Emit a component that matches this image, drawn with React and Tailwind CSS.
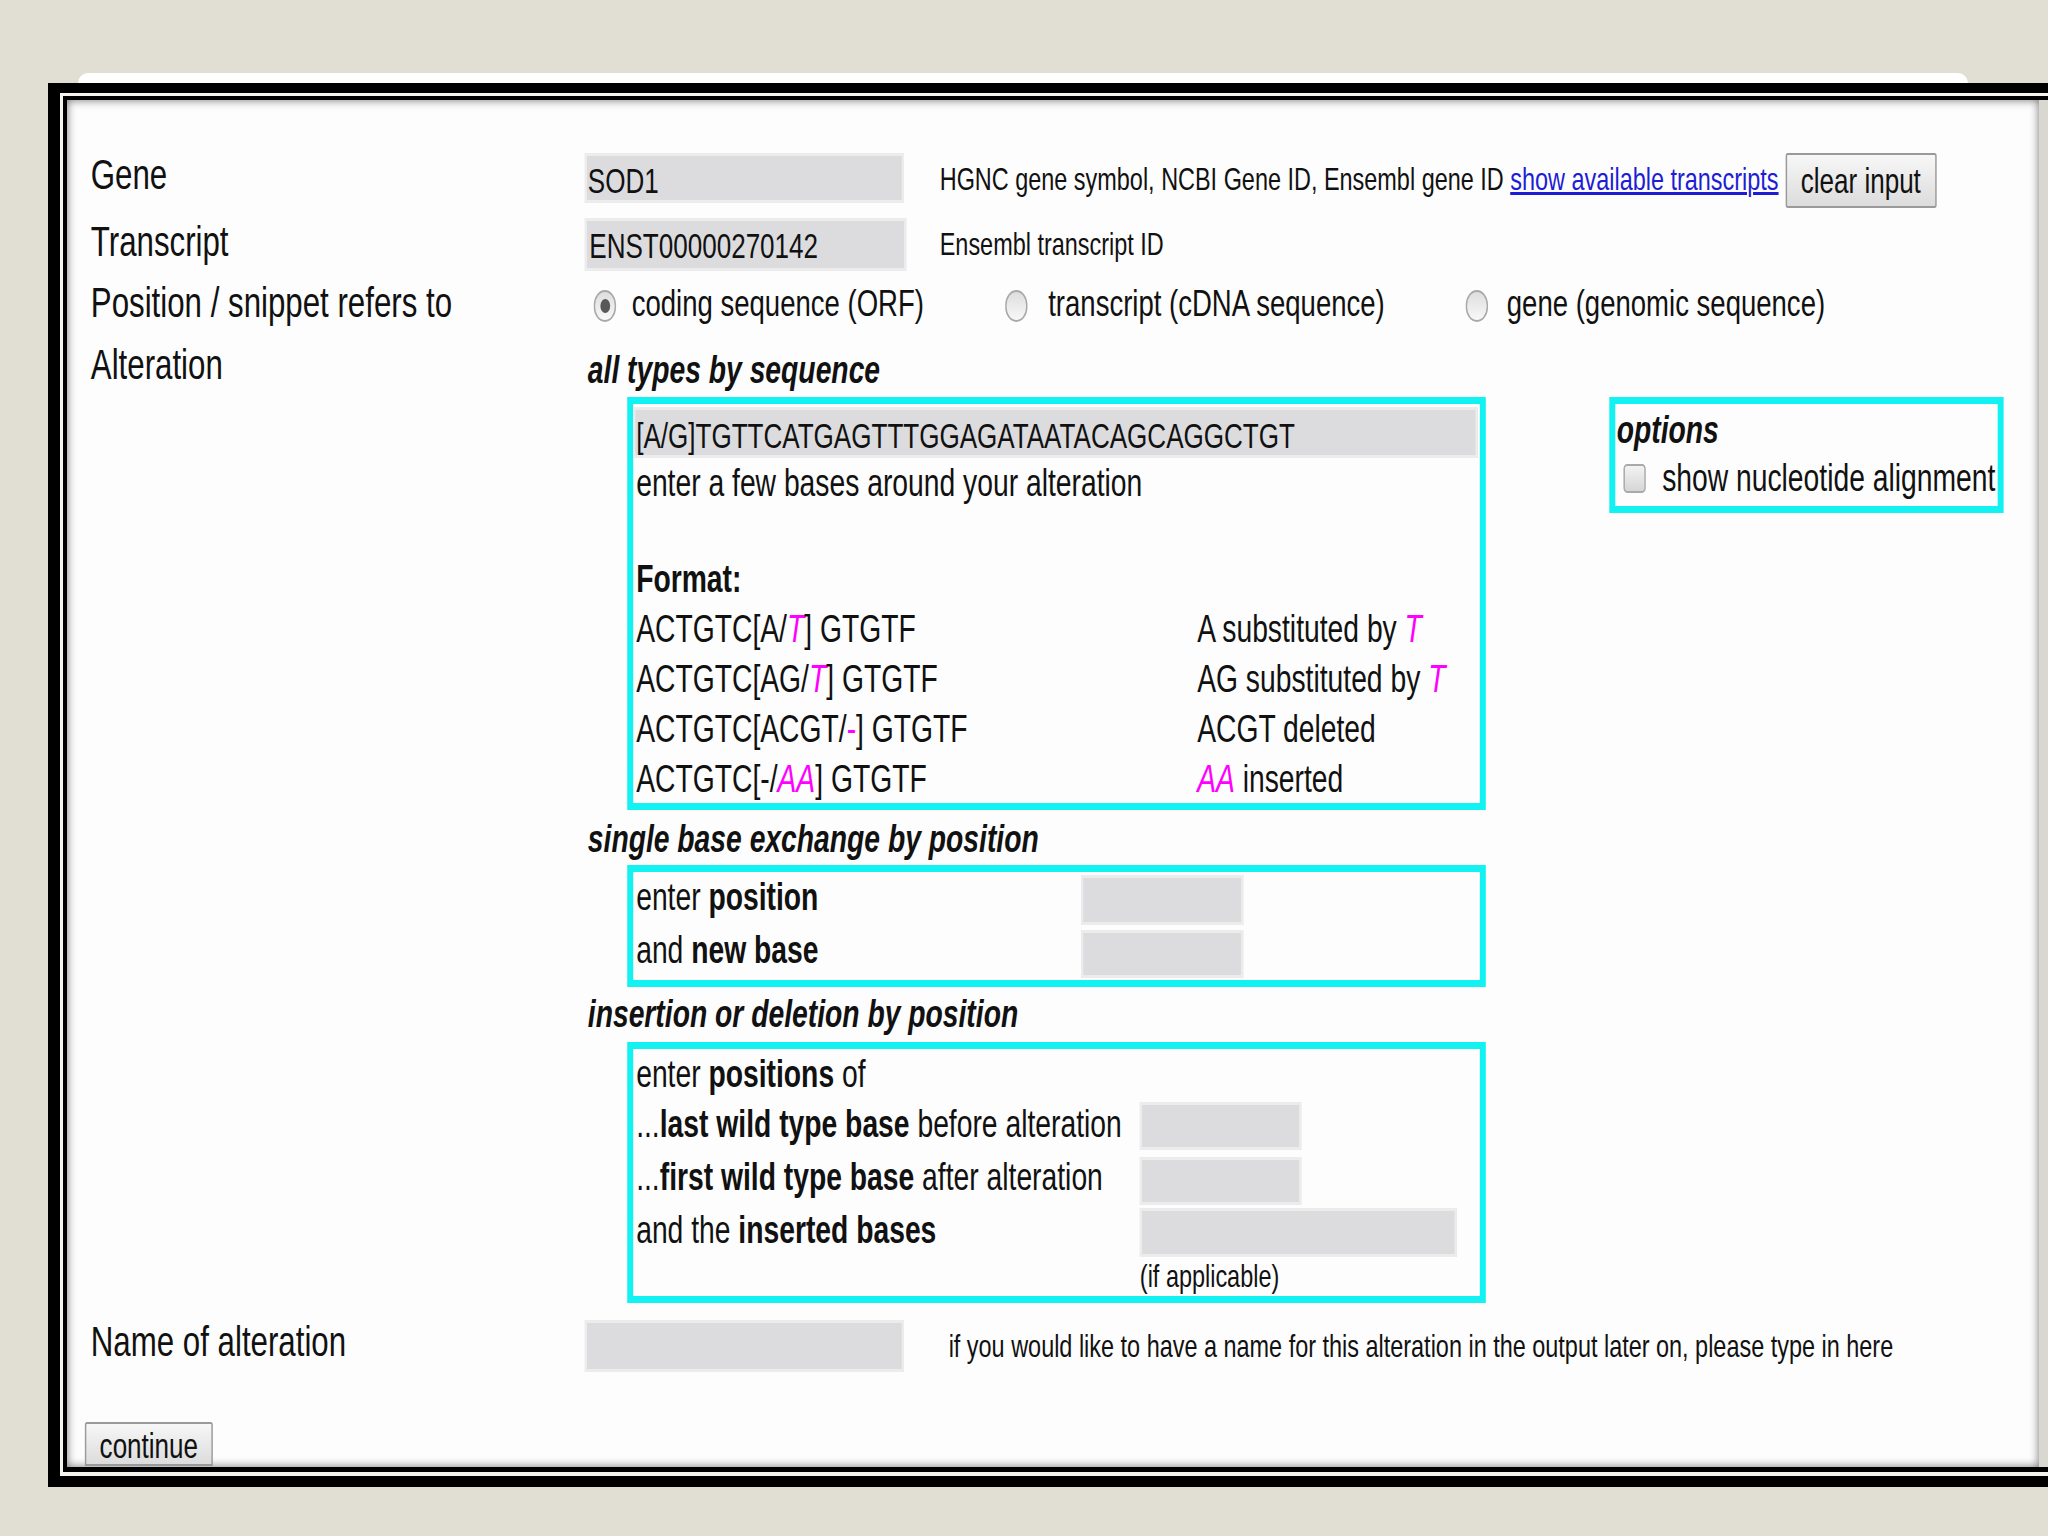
const Box = ({ className = "", children }) => (
  <div className={`border-x-[8px] border-y-[7px] border-[#12f2f2] ${className}`}>{children}</div>
);

const Field = ({ className = "", children }) => (
  <div className={`border-[3px] border-[#ececec] bg-[#dcdcde] whitespace-nowrap ${className}`}>{children}</div>
);

const Radio = ({ checked, className = "" }) => (
  <span
    className={`mt-[12px] flex h-[32px] w-[30px] shrink-0 items-center justify-center rounded-full border-[2px] border-[#a9a9a9] bg-linear-to-b from-[#dedede] to-[#f8f8f8] ${className}`}
  >
    {checked && <span className="h-[14px] w-[13px] rounded-full bg-[#585858]" />}
  </span>
);

const Btn = ({ className = "", children }) => (
  <button
    className={`shrink-0 rounded-[3px] border-[2px] border-[#9a9a9a] bg-linear-to-b from-[#f7f7f7] to-[#dcdcdc] text-[35px] text-[#111] ${className}`}
  >
    {children}
  </button>
);

const M = ({ children }) => <i className="text-[#f0f]">{children}</i>;

export default function App() {
  return (
    <div className="h-[1536px] w-[2048px] overflow-hidden bg-[#e1ded4] pt-[73px] font-['Liberation_Sans',Arial,sans-serif] text-[#111]">
      <div className="ml-[78px] h-[10px] w-[1890px] rounded-t-[16px] bg-white" />
      <div className="ml-[48px] h-[1404px] w-[2010px] bg-black pt-[10px] pb-[11px] pl-[12px]">
        <div className="h-full bg-[#f4f3ee] pt-[3px] pb-[4px] pl-[3px]">
          <div className="flex h-full bg-black pt-[4px] pb-[5px] pl-[4px]">
            <div className="h-full w-[1972px] shrink-0 overflow-hidden bg-[#fdfdfd] shadow-[inset_0_0_10px_rgba(0,0,0,0.55)]">
              <div className="w-[2650px] origin-top-left scale-x-[0.744] pt-[50px] pl-[32px]">
                <div className="grid grid-cols-[664px_1954px]">
                  {/* Gene */}
                  <div className="h-[67px] text-[42px] leading-[50px]">Gene</div>
                  <div className="flex h-[67px] items-start">
                    <Field className="mt-[3px] h-[50px] w-[429px] pl-[1px] text-[35px] leading-[50px]">SOD1</Field>
                    <span className="mt-[4px] ml-[48px] whitespace-nowrap text-[31.5px] leading-[50px]">
                      HGNC gene symbol, NCBI Gene ID, Ensembl gene ID{" "}
                      <a className="text-[#1d1dd6] underline">show available transcripts</a>
                    </span>
                    <Btn className="mt-[3px] ml-[9px] h-[55px] w-[203px]">clear input</Btn>
                  </div>

                  {/* Transcript */}
                  <div className="h-[61px] text-[42px] leading-[50px]">Transcript</div>
                  <div className="flex h-[61px] items-start">
                    <Field className="mt-[1px] h-[53px] w-[432px] pl-[3px] text-[35px] leading-[50px]">ENST00000270142</Field>
                    <span className="mt-[2px] ml-[45px] whitespace-nowrap text-[31.5px] leading-[50px]">Ensembl transcript ID</span>
                  </div>

                  {/* Position */}
                  <div className="h-[62px] text-[42px] leading-[50px] whitespace-nowrap">Position / snippet refers to</div>
                  <div className="ml-[12px] flex h-[62px] items-start whitespace-nowrap text-[37px] leading-[50px]">
                    <Radio checked />
                    <span className="mt-[1px] ml-[21px]">coding sequence (ORF)</span>
                    <Radio className="ml-[109px]" />
                    <span className="mt-[1px] ml-[28px]">transcript (cDNA sequence)</span>
                    <Radio className="ml-[109px]" />
                    <span className="mt-[1px] ml-[25px]">gene (genomic sequence)</span>
                  </div>

                  {/* Alteration */}
                  <div className="text-[42px] leading-[50px]">Alteration</div>
                  <div className="h-[963px]">
                    <div className="mt-[7px] ml-[4px] text-[38px] leading-[46px] font-bold italic">all types by sequence</div>
                    <div className="mt-[4px] ml-[57px] flex items-start">
                      <Box className="h-[413px] w-[1154px]">
                        <Field className="mt-[3px] mr-[3px] h-[51px] pl-[1px] text-[35px] leading-[51px]">
                          [A/G]TGTTCATGAGTTTGGAGATAATACAGCAGGCTGT
                        </Field>
                        <div className="pl-[4px] text-[38px] leading-[50px] whitespace-nowrap">
                          <div>enter a few bases around your alteration</div>
                          <div className="h-[46px]" />
                          <div className="font-bold">Format:</div>
                          <div className="grid grid-cols-[754px_1fr]">
                            <div>ACTGTC[A/<M>T</M>] GTGTF</div>
                            <div>A substituted by <M>T</M></div>
                            <div>ACTGTC[AG/<M>T</M>] GTGTF</div>
                            <div>AG substituted by <M>T</M></div>
                            <div>ACTGTC[ACGT/<span className="text-[#f0f]">-</span>] GTGTF</div>
                            <div>ACGT deleted</div>
                            <div>ACTGTC[-/<M>AA</M>] GTGTF</div>
                            <div><M>AA</M> inserted</div>
                          </div>
                        </div>
                      </Box>
                      <Box className="ml-[166px] h-[116px] w-[530px]">
                        <div className="pt-[3px] pl-[2px] text-[38px] leading-[46px] font-bold italic">options</div>
                        <div className="flex items-start whitespace-nowrap text-[38px] leading-[50px]">
                          <span className="mt-[11px] ml-[11px] h-[29px] w-[30px] shrink-0 rounded-[5px] border-[2px] border-[#a9a9a9] bg-linear-to-b from-[#f3f3f3] to-[#d6d6d6]" />
                          <span className="ml-[22px]">show nucleotide alignment</span>
                        </div>
                      </Box>
                    </div>

                    <div className="mt-[6px] ml-[4px] text-[38px] leading-[46px] font-bold italic">single base exchange by position</div>
                    <Box className="mt-[3px] ml-[57px] h-[122px] w-[1154px]">
                      <div className="grid grid-cols-[602px_218px] text-[38px] leading-[50px] whitespace-nowrap">
                        <div className="h-[53px] pl-[4px]">
                          enter <b>position</b>
                        </div>
                        <Field className="mt-[3px] h-[50px]" />
                        <div className="h-[55px] pl-[4px]">
                          and <b>new base</b>
                        </div>
                        <Field className="mt-[5px] h-[48px]" />
                      </div>
                    </Box>

                    <div className="mt-[4px] ml-[4px] text-[38px] leading-[46px] font-bold italic">insertion or deletion by position</div>
                    <Box className="mt-[5px] ml-[57px] h-[261px] w-[1154px]">
                      <div className="grid grid-cols-[681px_426px] text-[38px] leading-[50px] whitespace-nowrap">
                        <div className="col-span-2 h-[50px] pl-[4px]">
                          enter <b>positions</b> of
                        </div>
                        <div className="h-[53px] pl-[4px]">
                          ...<b>last wild type base</b> before alteration
                        </div>
                        <div>
                          <Field className="mt-[3px] h-[48px] w-[217px]" />
                        </div>
                        <div className="h-[53px] pl-[4px]">
                          ...<b>first wild type base</b> after alteration
                        </div>
                        <div>
                          <Field className="mt-[5px] h-[48px] w-[217px]" />
                        </div>
                        <div className="h-[53px] pl-[4px]">
                          and the <b>inserted bases</b>
                        </div>
                        <div>
                          <Field className="mt-[3px] h-[49px] w-[426px]" />
                        </div>
                        <div />
                        <div className="text-[31.5px] leading-[36px]">(if applicable)</div>
                      </div>
                    </Box>
                  </div>

                  {/* Name of alteration */}
                  <div className="mt-[14px] h-[62px] text-[42px] leading-[50px] whitespace-nowrap">Name of alteration</div>
                  <div className="mt-[14px] flex h-[62px] items-start">
                    <Field className="mt-[3px] h-[52px] w-[429px]" />
                    <span className="mt-[4px] ml-[60px] whitespace-nowrap text-[31.5px] leading-[50px]">
                      if you would like to have a name for this alteration in the output later on, please type in here
                    </span>
                  </div>
                </div>

                <Btn className="mt-[43px] -ml-[8px] h-[44px] w-[172px] pt-[4px] leading-[34px] rounded-b-none">continue</Btn>
              </div>
            </div>
            <div className="h-full flex-1 bg-[#d8d7d0]" />
          </div>
        </div>
      </div>
    </div>
  );
}
